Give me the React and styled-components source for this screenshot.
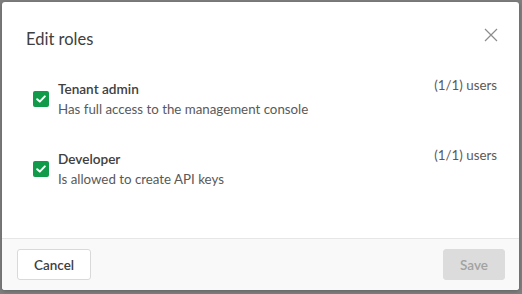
import React from "react";
import styled, { createGlobalStyle } from "styled-components";

const Global = createGlobalStyle`
  html, body { margin: 0; padding: 0; }
  body {
    width: 522px;
    height: 294px;
    overflow: hidden;
    background: #808080;
    font-family: "Lato", "Open Sans", sans-serif;
    -webkit-font-smoothing: antialiased;
  }
`;

const Backdrop = styled.div`
  width: 522px;
  height: 294px;
  box-sizing: border-box;
  padding: 2px 3px 4px 2px;
  background: #7f7f7f;
  display: flex;
`;

const Dialog = styled.div`
  flex: 1;
  display: flex;
  flex-direction: column;
  background: #ffffff;
  border-radius: 3px;
  overflow: hidden;
  box-shadow: 0 1px 4px rgba(0, 0, 0, 0.25);
`;

const Header = styled.div`
  display: flex;
  justify-content: space-between;
  align-items: flex-start;
  padding: 25px 21px 0 24px;
`;

const Title = styled.h2`
  margin: 0;
  font-size: 16.5px;
  line-height: 24px;
  font-weight: 400;
  color: #404040;
`;

const CloseButton = styled.button`
  border: 0;
  background: transparent;
  padding: 0;
  margin-top: 1px;
  width: 14px;
  height: 14px;
  display: flex;
  cursor: pointer;
`;

const RoleList = styled.div`
  display: flex;
  flex-direction: column;
  gap: 30px;
  padding: 28px 22px 0 31px;
`;

const Role = styled.div`
  display: flex;
  align-items: center;
  gap: 9px;
`;

const Check = styled.span`
  width: 16px;
  height: 16px;
  border-radius: 2px;
  background: #109a4a;
  display: flex;
  align-items: center;
  justify-content: center;
  flex-shrink: 0;
`;

const RoleText = styled.div`
  flex: 1;
  display: flex;
  flex-direction: column;
`;

const RoleName = styled.div`
  font-size: 13.6px;
  line-height: 20px;
  font-weight: 600;
  color: #404040;
`;

const RoleDesc = styled.div`
  font-size: 13.3px;
  line-height: 20px;
  color: #595959;
`;

const Users = styled.div`
  align-self: flex-start;
  font-size: 13.3px;
  line-height: 12px;
  color: #595959;
`;

const Footer = styled.div`
  margin-top: auto;
  border-top: 1px solid #e6e6e6;
  background: #f9f9f9;
  display: flex;
  justify-content: space-between;
  padding: 10px 14px 10px 15px;
`;

const Button = styled.button`
  height: 31px;
  box-sizing: border-box;
  padding: 0 16px;
  border-radius: 3px;
  font-family: inherit;
  font-size: 13.5px;
  font-weight: 600;
  border: 1px solid ${(p) => (p.$disabled ? "#dcdcdc" : "#d9d9d9")};
  background: ${(p) => (p.$disabled ? "#dcdcdc" : "#ffffff")};
  color: ${(p) => (p.$disabled ? "#a2a2a2" : "#404040")};
`;

const CheckIcon = () => (
  <svg width="10" height="8" viewBox="0 0 10 8">
    <path d="M1.2 4.2 L3.8 6.6 L8.8 1.4" fill="none" stroke="#fff" strokeWidth="2" strokeLinecap="round" strokeLinejoin="round" />
  </svg>
);

const roles = [
  { name: "Tenant admin", desc: "Has full access to the management console", users: "(1/1) users" },
  { name: "Developer", desc: "Is allowed to create API keys", users: "(1/1) users" },
];

export default function App() {
  return (
    <>
      <Global />
      <Backdrop>
        <Dialog>
          <Header>
            <Title>Edit roles</Title>
            <CloseButton aria-label="Close">
              <svg width="14" height="14" viewBox="0 0 14 14">
                <path d="M1 1 L13 13 M13 1 L1 13" stroke="#8c8c8c" strokeWidth="1.2" />
              </svg>
            </CloseButton>
          </Header>
          <RoleList>
            {roles.map((r) => (
              <Role key={r.name}>
                <Check><CheckIcon /></Check>
                <RoleText>
                  <RoleName>{r.name}</RoleName>
                  <RoleDesc>{r.desc}</RoleDesc>
                </RoleText>
                <Users>{r.users}</Users>
              </Role>
            ))}
          </RoleList>
          <Footer>
            <Button>Cancel</Button>
            <Button $disabled disabled>Save</Button>
          </Footer>
        </Dialog>
      </Backdrop>
    </>
  );
}
